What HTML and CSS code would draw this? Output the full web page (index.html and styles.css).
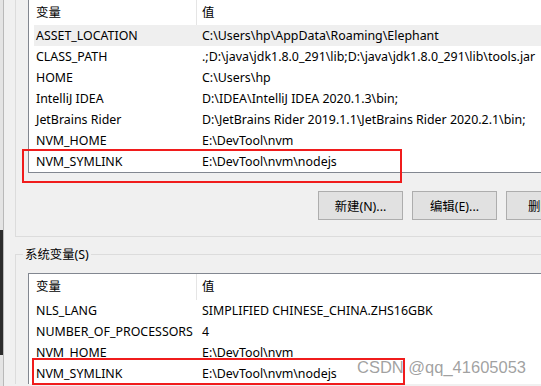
FILE: index.html
```html
<html>
<head>
    <title>环境变量</title>
    <link rel="stylesheet" href="styles.css">
</head>
<body>
    <div class="screen">
        <div class="edge">
            <div class="edge-dark"></div>
        </div>

        <div class="dialog">
            <!-- user variables -->
            <section class="group group-user">
                <div class="list">
                    <div class="row head"><span class="c1">变量</span><span class="c2">值</span></div>
                    <div class="row sel"><span class="c1">ASSET_LOCATION</span><span class="c2">C:\Users\hp\AppData\Roaming\Elephant</span></div>
                    <div class="row"><span class="c1">CLASS_PATH</span><span class="c2">.;D:\java\jdk1.8.0_291\lib;D:\java\jdk1.8.0_291\lib\tools.jar</span></div>
                    <div class="row"><span class="c1">HOME</span><span class="c2">C:\Users\hp</span></div>
                    <div class="row"><span class="c1">IntelliJ IDEA</span><span class="c2">D:\IDEA\IntelliJ IDEA 2020.1.3\bin;</span></div>
                    <div class="row"><span class="c1">JetBrains Rider</span><span class="c2">D:\JetBrains Rider 2019.1.1\JetBrains Rider 2020.2.1\bin;</span></div>
                    <div class="row"><span class="c1">NVM_HOME</span><span class="c2">E:\DevTool\nvm</span></div>
                    <div class="row"><span class="c1">NVM_SYMLINK</span><span class="c2">E:\DevTool\nvm\nodejs</span></div>
                </div>
                <div class="buttons">
                    <button>新建(N)...</button>
                    <button>编辑(E)...</button>
                    <button>删除</button>
                </div>
            </section>

            <!-- system variables -->
            <section class="group group-sys">
                <div class="legend">系统变量(S)</div>
                <div class="list list-sys">
                    <div class="row head"><span class="c1">变量</span><span class="c2">值</span></div>
                    <div class="row"><span class="c1">NLS_LANG</span><span class="c2">SIMPLIFIED CHINESE_CHINA.ZHS16GBK</span></div>
                    <div class="row"><span class="c1">NUMBER_OF_PROCESSORS</span><span class="c2">4</span></div>
                    <div class="row"><span class="c1">NVM_HOME</span><span class="c2">E:\DevTool\nvm</span></div>
                    <div class="row"><span class="c1">NVM_SYMLINK</span><span class="c2">E:\DevTool\nvm\nodejs</span></div>
                </div>
            </section>
        </div>

        <div class="mark mark-top"></div>
        <div class="mark mark-bottom"></div>
        <div class="watermark">CSDN @qq_41605053</div>
    </div>
</body>
</html>
```

FILE: styles.css
```css
body {
    margin: 0;
    background-color: #f0f0f0;
    font-family: "Noto Sans", "Noto Sans CJK SC", sans-serif;
    font-size: 12.4px;
    color: #000;
    overflow: hidden;
}

.screen {
    position: relative;
    display: flex;
    width: 541px;
    height: 386px;
    overflow: hidden;
}

.edge {
    flex: 0 0 3px;
    background-color: #e4e4e4;
    border-right: 1px solid #b9b9b9;
    padding-top: 230px;
}

.edge-dark {
    height: 125px;
    background-color: #2b2b2b;
}

.dialog {
    flex: 0 0 620px;
    padding-left: 11px;
}

.group {
    border-left: 1px solid #dcdcdc;
    padding-left: 12px;
}

.group-user {
    border-bottom: 1px solid #dcdcdc;
    padding-bottom: 16px;
}

.group-sys {
    margin-top: 17px;
    border-top: 1px solid #dcdcdc;
}

.legend {
    width: fit-content;
    margin: -9px 0 0 -5px;
    padding: 0 2px;
    height: 17px;
    line-height: 17px;
    background-color: #f0f0f0;
}

.list {
    background-color: #fff;
    border-left: 1px solid #828790;
    border-bottom: 1px solid #828790;
}

.list-sys {
    margin-top: 10px;
    border-top: 1px solid #828790;
    border-bottom: none;
}

.row {
    display: flex;
    height: 21px;
    line-height: 21px;
    white-space: nowrap;
}

.row .c1 {
    flex: 0 0 161px;
    padding-left: 7px;
}

.row .c2 {
    padding-left: 5px;
}

.row.head {
    height: 25px;
    line-height: 25px;
}

.row.head .c1 {
    flex-basis: 160px;
    border-right: 1px solid #e5e5e5;
}

.row.sel {
    margin-left: 5px;
    background-color: #efefef;
}

.row.sel .c1 {
    flex-basis: 161px;
    padding-left: 2px;
}

.list-sys .row.head {
    height: 26px;
    line-height: 26px;
}

.buttons {
    display: flex;
    margin-top: 18px;
    padding-left: 290px;
}

.buttons button {
    width: 85px;
    height: 29px;
    margin-right: 9px;
    padding: 0;
    background-color: #e1e1e1;
    border: 1px solid #adadad;
    font-family: "Noto Sans", "Noto Sans CJK SC", sans-serif;
    font-size: 12.4px;
    color: #000;
    text-align: center;
}

.buttons button:last-child {
    text-align: left;
    padding-left: 21px;
}

.mark {
    position: absolute;
    border: 2px solid #f01c1c;
}

.mark-top {
    left: 22px;
    top: 149px;
    width: 376px;
    height: 30px;
}

.mark-bottom {
    left: 32px;
    top: 358px;
    width: 369px;
    height: 23px;
}

.watermark {
    position: absolute;
    left: 357px;
    top: 358px;
    font-family: "Liberation Sans", Arial, sans-serif;
    font-size: 16.5px;
    color: rgba(130, 130, 130, 0.75);
}
```
